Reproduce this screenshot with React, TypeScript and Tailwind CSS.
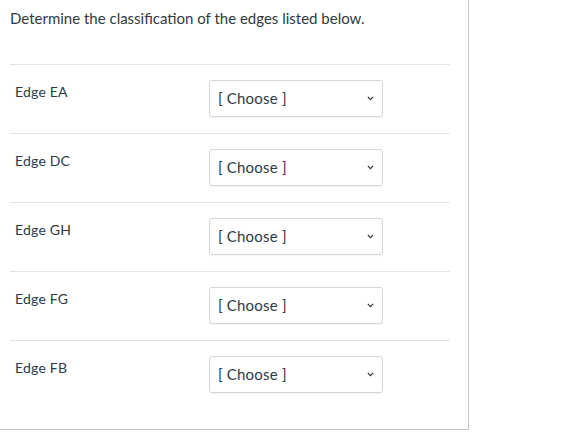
const edges = ["Edge EA", "Edge DC", "Edge GH", "Edge FG", "Edge FB"];

function ChooseSelect() {
  return (
    <div className="relative h-[37px] w-[174px] rounded-[3px] border border-[#d6d6d6] bg-white shadow-[0_1px_1px_rgba(0,0,0,0.04)]">
      <span className="absolute left-[8px] top-[8px] text-[15px] leading-[19px] tracking-[0.2px] text-[#2d3b45]">[ Choose ]</span>
      <svg
        className="absolute right-[8px] top-[15px]"
        width="7"
        height="5"
        viewBox="0 0 7 5"
        fill="none"
      >
        <path d="M0.8 0.9 L3.5 3.7 L6.2 0.9" stroke="#333" strokeWidth="1.2" />
      </svg>
    </div>
  );
}

export default function App() {
  return (
    <div className="h-[445px] w-[585px] bg-white" style={{ fontFamily: "Lato, 'Open Sans', sans-serif" }}>
      <div className="h-[430px] w-[469px] border-r border-b border-[#c4c4c4] pl-[10px]">
        <p className="pt-[10px] text-[15px] leading-[17px] text-[#2d3b45]">
          Determine the classification of the edges listed below.
        </p>
        <div className="mt-[37px] w-[440px]">
          {edges.map((e) => (
            <div key={e} className="flex h-[69px] items-start border-t border-[#e2e2e2] pl-[5px]">
              <div className="w-[194px] pt-[18px] text-[14px] leading-[17px] tracking-[0.2px] text-[#2d3b45]">{e}</div>
              <div className="pt-[15px]">
                <ChooseSelect />
              </div>
            </div>
          ))}
        </div>
      </div>
    </div>
  );
}
